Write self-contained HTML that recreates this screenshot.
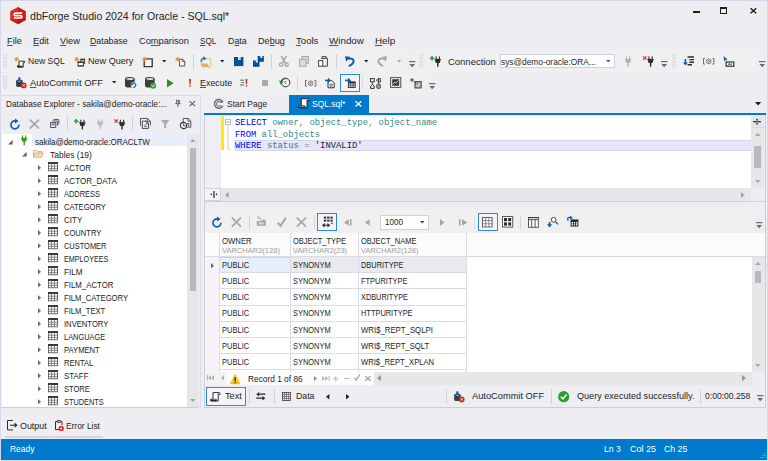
<!DOCTYPE html>
<html><head><meta charset="utf-8"><title>dbForge Studio 2024 for Oracle</title>
<style>
*{box-sizing:border-box;margin:0;padding:0}
html,body{width:768px;height:461px;overflow:hidden;background:#EEEEF2;font-family:"Liberation Sans",sans-serif;font-size:10px;color:#242424}
.a{position:absolute}
.t{position:absolute;white-space:nowrap;line-height:14px;height:14px;transform-origin:0 0}
.m{position:absolute;white-space:pre;font-family:"Liberation Mono",monospace;transform-origin:0 0}
u{text-decoration:underline;text-underline-offset:1px;text-decoration-thickness:0.9px;text-decoration-color:#555}
svg{position:absolute;overflow:visible}
</style></head><body>
<div class="a" style="left:0px;top:0px;width:768px;height:461px;background:transparent;border:1px solid #D6D9EA;border-right-width:1.5px;border-bottom-width:1.5px;"></div>
<div class="a" style="left:1px;top:50.5px;width:406px;height:21.5px;background:#F0F0F1;"></div>
<div class="a" style="left:417px;top:50.5px;width:244px;height:21.5px;background:#F0F0F1;"></div>
<div class="a" style="left:670px;top:50.5px;width:85px;height:21.5px;background:#F0F0F1;"></div>
<div class="a" style="left:1px;top:72.5px;width:425.5px;height:21px;background:#F0F0F1;"></div>
<div class="a" style="left:205px;top:210px;width:549px;height:23px;background:#F0F0F1;"></div>
<div class="a" style="left:2px;top:134px;width:185px;height:273px;background:#fff;"></div>
<div class="a" style="left:187px;top:134px;width:12px;height:273px;background:#E7E7EA;"></div>
<div class="a" style="left:190px;top:148px;width:6px;height:143px;background:#B9B9BD;"></div>
<div class="a" style="left:32.3px;top:134.3px;width:154.7px;height:11.9px;background:#E9EEFB;"></div>
<div class="a" style="left:1px;top:407px;width:198px;height:1px;background:#CCCEDB;"></div>
<div class="a" style="left:203.8px;top:112.9px;width:562.2px;height:1.9px;background:#007ACC;"></div>
<div class="a" style="left:204px;top:114.8px;width:561px;height:1.2px;background:#E4EAF6;"></div>
<div class="a" style="left:204px;top:115px;width:1px;height:293px;background:#CCCEDB;"></div>
<div class="a" style="left:764.5px;top:115px;width:1px;height:293px;background:#CCCEDB;"></div>
<div class="a" style="left:204px;top:407px;width:561px;height:1px;background:#CCCEDB;"></div>
<div class="a" style="left:289.25px;top:95px;width:79.5px;height:19px;background:#007ACC;"></div>
<div class="a" style="left:205px;top:116px;width:545.5px;height:72px;background:#fff;"></div>
<div class="a" style="left:205px;top:116px;width:15.75px;height:72px;background:#EFEFF3;"></div>
<div class="a" style="left:220.75px;top:116.25px;width:3.25px;height:33.75px;background:#FFEE00;"></div>
<div class="a" style="left:234px;top:139.5px;width:517px;height:11px;background:#E6E6FA;border-top:1px solid #D4D4EC;border-bottom:1px solid #D4D4EC;"></div>
<div class="a" style="left:205px;top:188px;width:546px;height:13px;background:#E7E7EA;"></div>
<div class="a" style="left:750.5px;top:116px;width:13.7px;height:85px;background:#E7E7EA;"></div>
<div class="a" style="left:753.5px;top:145.5px;width:7px;height:22px;background:#B9B9BD;"></div>
<div class="a" style="left:205px;top:201px;width:559.5px;height:1px;background:#CCCEDB;"></div>
<div class="a" style="left:205px;top:233px;width:559.5px;height:23.6px;background:#FBFBFC;"></div>
<div class="a" style="left:205px;top:256.6px;width:546.5px;height:115.4px;background:#fff;"></div>
<div class="a" style="left:205px;top:256.6px;width:14.5px;height:115.4px;background:#F5F5F8;"></div>
<div class="a" style="left:751.5px;top:256.6px;width:13px;height:115.4px;background:#E7E7EA;"></div>
<div class="a" style="left:754.5px;top:270.7px;width:6.5px;height:12.5px;background:#B9B9BD;"></div>
<div class="a" style="left:205px;top:372px;width:546.5px;height:13px;background:#F3F3F6;"></div>
<div class="a" style="left:226px;top:372px;width:148px;height:13px;background:#FCFCFD;"></div>
<div class="a" style="left:373.75px;top:372px;width:377.75px;height:13px;background:#E7E7EA;"></div>
<div class="a" style="left:1px;top:438.5px;width:766px;height:21px;background:#007ACC;"></div>
<div class="a" style="left:5px;top:435.8px;width:44.9px;height:2.7px;background:#D2D4DE;"></div>
<div class="a" style="left:51.3px;top:435.8px;width:51.6px;height:2.7px;background:#D2D4DE;"></div>
<div class="a" style="left:219px;top:256.8px;width:247.5px;height:16.08px;background:#E9E9EE;"></div>
<div class="a" style="left:219px;top:256.8px;width:71.5px;height:16.08px;background:#E6EFFB;border:1px solid #C2D6F0;"></div>
<div class="a" style="left:205px;top:256.3px;width:559.5px;height:1px;background:#DADBE7;"></div>
<div class="a" style="left:219px;top:272.38px;width:248px;height:1px;background:#DADBE7;"></div>
<div class="a" style="left:219px;top:288.46px;width:248px;height:1px;background:#DADBE7;"></div>
<div class="a" style="left:219px;top:304.54px;width:248px;height:1px;background:#DADBE7;"></div>
<div class="a" style="left:219px;top:320.62px;width:248px;height:1px;background:#DADBE7;"></div>
<div class="a" style="left:219px;top:336.7px;width:248px;height:1px;background:#DADBE7;"></div>
<div class="a" style="left:219px;top:352.78px;width:248px;height:1px;background:#DADBE7;"></div>
<div class="a" style="left:219px;top:368.86px;width:248px;height:1px;background:#DADBE7;"></div>
<div class="a" style="left:219px;top:233px;width:1px;height:139px;background:#DADBE7;"></div>
<div class="a" style="left:290px;top:233px;width:1px;height:139px;background:#DADBE7;"></div>
<div class="a" style="left:358px;top:233px;width:1px;height:139px;background:#DADBE7;"></div>
<div class="a" style="left:466px;top:233px;width:1px;height:139px;background:#DADBE7;"></div>
<svg style="left:10.4px;top:6.7px" width="16" height="17.2" viewBox="0 0 16 17.2"><path d="M8 0L15.8 4.3V12.9L8 17.2L0.2 12.9V4.3Z" fill="#E5261C"/><path d="M8 0L15.8 4.3V12.9L8 17.2Z" fill="#B8160E" opacity=".55"/><path d="M8 8.6L15.8 12.9L8 17.2L0.2 12.9Z" fill="#A8120C" opacity=".35"/><path d="M12.3 6.2H5.2Q4.2 6.2 4.2 7.2V7.7Q4.2 8.6 5.2 8.6H10.8Q11.8 8.6 11.8 9.5V10Q11.8 11 10.8 11H3.7" fill="none" stroke="#fff" stroke-width="1.7"/></svg>
<div class="a" style="left:692.6px;top:10.6px;width:7.2px;height:2.3px;background:#1E1E1E;"></div>
<div class="a" style="left:720px;top:7.2px;width:7.2px;height:6.6px;background:transparent;border:1px solid #1E1E1E;border-top-width:2px;"></div>
<svg style="left:749.7px;top:7.7px" width="6.8" height="5.6" viewBox="0 0 6.8 5.6"><path d="M0.6 0.3L6.2 5.3M6.2 0.3L0.6 5.3" stroke="#1E1E1E" stroke-width="1.5"/></svg>
<svg style="left:2.7px;top:54px" width="4.6" height="14"><defs><pattern id="g2_54" width="3.4" height="3.4" patternUnits="userSpaceOnUse"><rect x="0" y="0" width="1.1" height="1.1" fill="#BCBCC0"/><rect x="1.7" y="1.7" width="1.1" height="1.1" fill="#BCBCC0"/></pattern></defs><rect width="4.6" height="14" fill="url(#g2_54)"/></svg>
<svg style="left:13.5px;top:55.5px" width="12" height="12" viewBox="0 0 12 12"><path d="M2.7 0.5 L3.564 2.3360000000000003 L5.4 3.2 L3.564 4.064 L2.7 5.9 L1.836 4.064 L0.0 3.2 L1.836 2.3360000000000003Z" fill="#DB9630"/><path d="M0.8100000000000003 1.3100000000000003L4.59 5.09M4.59 1.3100000000000003L0.8100000000000003 5.09" stroke="#DB9630" stroke-width="0.8"/><path d="M5 5.2H10.6V6.6H9.2V11.2H3.6V9.6H5Z" fill="#fff" stroke="#2B2B2B" stroke-width="1"/><path d="M3.6 10.4H8.2" stroke="#2B2B2B" stroke-width="1.6"/></svg>
<svg style="left:73.5px;top:55.5px" width="12" height="11" viewBox="0 0 12 11"><path d="M2.7 0.5 L3.564 2.3360000000000003 L5.4 3.2 L3.564 4.064 L2.7 5.9 L1.836 4.064 L0.0 3.2 L1.836 2.3360000000000003Z" fill="#DB9630"/><path d="M0.8100000000000003 1.3100000000000003L4.59 5.09M4.59 1.3100000000000003L0.8100000000000003 5.09" stroke="#DB9630" stroke-width="0.8"/><rect x="6.9" y="3.3" width="3.8" height="4.4" fill="#fff" stroke="#3A3A3C" stroke-width="0.9"/><path d="M6.5 3.5H11.1" stroke="#3A3A3C" stroke-width="1.6"/><rect x="4.1" y="6" width="5.3" height="3.9" fill="#fff" stroke="#3A3A3C" stroke-width="0.9"/><path d="M3.6 6.3H9.8" stroke="#3A3A3C" stroke-width="1.5"/><path d="M3.6 9.9H9.8" stroke="#3A3A3C" stroke-width="1.1"/></svg>
<svg style="left:142px;top:55.5px" width="11.5" height="11.5" viewBox="0 0 11.5 11.5"><path d="M3.5 2.9H10.2V10.6H2.2V5" fill="#F4F4F6" stroke="#3A3A3C" stroke-width="1.4"/><path d="M2.5 0.5 L3.364 2.3360000000000003 L5.2 3.2 L3.364 4.064 L2.5 5.9 L1.636 4.064 L-0.20000000000000018 3.2 L1.636 2.3360000000000003Z" fill="#DB9630"/><path d="M0.6100000000000001 1.3100000000000003L4.39 5.09M4.39 1.3100000000000003L0.6100000000000001 5.09" stroke="#DB9630" stroke-width="0.8"/></svg>
<svg style="left:161.6px;top:60px" width="4.4" height="2.4" viewBox="0 0 4.4 2.4"><path d="M0 0H4.4L2.2 2.4Z" fill="#2B2B2B"/></svg>
<svg style="left:175px;top:55.5px" width="11" height="11" viewBox="0 0 11 11"><path d="M4.5 3.2H7.6L9.7 5.3V10H4.5Z" fill="#F6F6F8" stroke="#444448" stroke-width="0.9"/><path d="M7.4 3.2V5.5H9.7" fill="none" stroke="#444448" stroke-width="0.8"/><path d="M2.6 0.5 L3.4640000000000004 2.3360000000000003 L5.300000000000001 3.2 L3.4640000000000004 4.064 L2.6 5.9 L1.736 4.064 L-0.10000000000000009 3.2 L1.736 2.3360000000000003Z" fill="#DB9630"/><path d="M0.7100000000000002 1.3100000000000003L4.49 5.09M4.49 1.3100000000000003L0.7100000000000002 5.09" stroke="#DB9630" stroke-width="0.8"/></svg>
<div class="a" style="left:193px;top:53.6px;width:1px;height:15px;background:#CFD1DE;"></div>
<svg style="left:200px;top:55.5px" width="12" height="12" viewBox="0 0 12 12"><rect x="2" y="2.8" width="8.7" height="8.2" fill="#F3F1EF"/><path d="M5.6 2.8H10.7V11.2H8" fill="none" stroke="#E3BE82" stroke-width="0.9"/><path d="M0.4 7.4H7.6L9.4 11.3H2Z" fill="#DDB26A"/><path d="M1.8 6.4Q0 3.2 3.6 2.4" fill="none" stroke="#3C84CE" stroke-width="1.6"/><path d="M3.3 0.2L6.3 2.4L3.5 4.6Z" fill="#0A5DB0"/></svg>
<svg style="left:220px;top:60px" width="4.4" height="2.4" viewBox="0 0 4.4 2.4"><path d="M0 0H4.4L2.2 2.4Z" fill="#2B2B2B"/></svg>
<svg style="left:234.1px;top:56.7px" width="9.4" height="9.1" viewBox="0 0 9.4 9.1"><path d="M0 0H9.4V9.1H0Z" fill="#00529C"/><rect x="4.1" y="0" width="2.9" height="3" fill="#fff"/><rect x="5.6" y="0.6" width="1" height="1.8" fill="#00529C"/></svg>
<svg style="left:253.2px;top:56px" width="11" height="10.8" viewBox="0 0 11 10.8"><rect x="4.7" y="0" width="6.2" height="5.8" fill="#00529C"/><rect x="7.3" y="0" width="2" height="1.9" fill="#fff"/><rect x="0" y="4.5" width="6.5" height="6.3" fill="#00529C"/><rect x="2.8" y="4.5" width="2" height="2" fill="#fff"/></svg>
<div class="a" style="left:271px;top:53.6px;width:1px;height:15px;background:#CFD1DE;"></div>
<svg style="left:279px;top:56px" width="9.6" height="10.8" viewBox="0 0 9.6 10.8"><path d="M2.2 0L6.6 7.4M7.4 0L3 7.4" stroke="#A8A8AC" stroke-width="1.6" fill="none"/><circle cx="2" cy="8.6" r="1.7" fill="none" stroke="#A8A8AC" stroke-width="1.3"/><circle cx="7.6" cy="8.6" r="1.7" fill="none" stroke="#A8A8AC" stroke-width="1.3"/></svg>
<svg style="left:299px;top:56px" width="10" height="10.8" viewBox="0 0 10 10.8"><rect x="3" y="0.5" width="6.5" height="6.8" fill="#DADADC" stroke="#A8A8AC" stroke-width="1"/><rect x="0.5" y="3.2" width="6.5" height="7" fill="#DADADC" stroke="#A8A8AC" stroke-width="1"/></svg>
<svg style="left:318px;top:56px" width="10.4" height="10.8" viewBox="0 0 10.4 10.8"><path d="M3 2.4H9.4V10.2H5" fill="none" stroke="#3A3A3C" stroke-width="0.95"/><path d="M4.2 2.4V0.6H8.2V2.4" fill="none" stroke="#3A3A3C" stroke-width="0.9"/><rect x="0.6" y="4.6" width="4.2" height="5.6" fill="#fff" stroke="#3A3A3C" stroke-width="0.95"/></svg>
<div class="a" style="left:336px;top:53.6px;width:1px;height:15px;background:#CFD1DE;"></div>
<svg style="left:344.5px;top:56px" width="10" height="10.6" viewBox="0 0 10 10.6"><path d="M2.4 2.8Q8.8 1.6 8.6 5.4Q8.4 8 3.8 10.2" fill="none" stroke="#0A5DB0" stroke-width="2"/><path d="M0 0.2L5 0.7L1.2 5.8Z" fill="#0A5DB0"/></svg>
<svg style="left:363.8px;top:60px" width="4.4" height="2.4" viewBox="0 0 4.4 2.4"><path d="M0 0H4.4L2.2 2.4Z" fill="#2B2B2B"/></svg>
<svg style="left:377.4px;top:56px" width="10" height="10.6" viewBox="0 0 10 10.6"><path d="M7.6 2.8Q1.2 1.6 1.4 5.4Q1.6 8 6.2 10.2" fill="none" stroke="#A8A8AC" stroke-width="2"/><path d="M10 0.2L5 0.7L8.8 5.8Z" fill="#A8A8AC"/></svg>
<svg style="left:397.2px;top:60px" width="4.4" height="2.4" viewBox="0 0 4.4 2.4"><path d="M0 0H4.4L2.2 2.4Z" fill="#A8A8AC"/></svg>
<svg style="left:409px;top:60.7px" width="6.4" height="6.5" viewBox="0 0 6.4 6.5"><rect x="0" y="0" width="6.4" height="1.2" fill="#6A6A6E"/><path d="M0.3 3H6.1L3.2 6.3Z" fill="#6A6A6E"/></svg>
<svg style="left:418.8px;top:54px" width="4.6" height="14"><defs><pattern id="g418_54" width="3.4" height="3.4" patternUnits="userSpaceOnUse"><rect x="0" y="0" width="1.1" height="1.1" fill="#BCBCC0"/><rect x="1.7" y="1.7" width="1.1" height="1.1" fill="#BCBCC0"/></pattern></defs><rect width="4.6" height="14" fill="url(#g418_54)"/></svg>
<svg style="left:430px;top:56px" width="11" height="10.8" viewBox="0 0 11 10.8"><path d="M-0.20000000000000018 2.3H4.2M2 0.09999999999999964V4.5" stroke="#2E9B34" stroke-width="1.6"/><g transform="translate(4.6,0)"><rect x="1" y="0.2" width="1.1" height="3" rx="0.5" fill="#2E2E30"/><rect x="4.2" y="0.2" width="1.1" height="3" rx="0.5" fill="#2E2E30"/><rect x="0" y="2.9" width="6.3" height="1.3" fill="#2E2E30"/><path d="M0.7 4H5.6V5.8Q5.6 7 4.4 7H1.9Q0.7 7 0.7 5.8Z" fill="#2E2E30"/><rect x="2.5" y="6.8" width="1.4" height="4" fill="#2E2E30"/></g></svg>
<div class="a" style="left:500px;top:54.4px;width:115px;height:13.8px;background:#fff;border:1px solid #CCD0E4;"></div>
<svg style="left:605.8px;top:60.2px" width="4.6" height="2.5" viewBox="0 0 4.6 2.5"><path d="M0 0H4.6L2.3 2.5Z" fill="#5A5A5E"/></svg>
<svg style="left:625px;top:56px" width="6.4" height="10.8" viewBox="0 0 6.4 10.8"><rect x="1" y="0.2" width="1.1" height="3" rx="0.5" fill="#B4B4B8"/><rect x="4.2" y="0.2" width="1.1" height="3" rx="0.5" fill="#B4B4B8"/><rect x="0" y="2.9" width="6.3" height="1.3" fill="#B4B4B8"/><path d="M0.7 4H5.6V5.8Q5.6 7 4.4 7H1.9Q0.7 7 0.7 5.8Z" fill="#B4B4B8"/><rect x="2.5" y="6.8" width="1.4" height="4" fill="#B4B4B8"/></svg>
<svg style="left:643px;top:56px" width="11" height="10.8" viewBox="0 0 11 10.8"><path d="M0.10000000000000009 0.30000000000000004L3.5 3.7M3.5 0.30000000000000004L0.10000000000000009 3.7" stroke="#D9291C" stroke-width="1.1"/><g transform="translate(4.4,0)"><rect x="1" y="0.2" width="1.1" height="3" rx="0.5" fill="#2E2E30"/><rect x="4.2" y="0.2" width="1.1" height="3" rx="0.5" fill="#2E2E30"/><rect x="0" y="2.9" width="6.3" height="1.3" fill="#2E2E30"/><path d="M0.7 4H5.6V5.8Q5.6 7 4.4 7H1.9Q0.7 7 0.7 5.8Z" fill="#2E2E30"/><rect x="2.5" y="6.8" width="1.4" height="4" fill="#2E2E30"/></g></svg>
<svg style="left:661.4px;top:61px" width="6.4" height="6.5" viewBox="0 0 6.4 6.5"><rect x="0" y="0" width="6.4" height="1.2" fill="#6A6A6E"/><path d="M0.3 3H6.1L3.2 6.3Z" fill="#6A6A6E"/></svg>
<svg style="left:672.2px;top:54px" width="4.6" height="14"><defs><pattern id="g672_54" width="3.4" height="3.4" patternUnits="userSpaceOnUse"><rect x="0" y="0" width="1.1" height="1.1" fill="#BCBCC0"/><rect x="1.7" y="1.7" width="1.1" height="1.1" fill="#BCBCC0"/></pattern></defs><rect width="4.6" height="14" fill="url(#g672_54)"/></svg>
<svg style="left:682.6px;top:56px" width="11" height="10.8" viewBox="0 0 11 10.8"><path d="M4.6 1H11M6.4 3.6H11M6.4 6.2H11M4.6 8.8H9" stroke="#2B2B2B" stroke-width="1.4"/><path d="M2.4 3V8" stroke="#0A5DB0" stroke-width="1.6"/><path d="M0 6.4H4.8L2.4 9.6Z" fill="#0A5DB0"/></svg>
<svg style="left:702.9px;top:58px" width="11.4" height="6.6" viewBox="0 0 11.4 6.6"><path d="M2 0.5H0.5V6.1H2M9.4 0.5H10.9V6.1H9.4" fill="none" stroke="#606064" stroke-width="0.9"/><circle cx="5.7" cy="3.3" r="2.4" fill="none" stroke="#606064" stroke-width="0.8"/><circle cx="5.7" cy="3.3" r="0.9" fill="none" stroke="#606064" stroke-width="0.7"/></svg>
<svg style="left:722.6px;top:56px" width="11.4" height="10.8" viewBox="0 0 11.4 10.8"><path d="M0.4 0L4.6 3.6L2.6 3.9L1.6 5.8Z" fill="#0A5DB0"/><rect x="3.2" y="6" width="7.6" height="4.2" fill="#fff" stroke="#2B2B2B" stroke-width="1.2"/><path d="M5 8.1H9" stroke="#2B2B2B" stroke-width="1"/></svg>
<svg style="left:758.8px;top:61px" width="6.4" height="6.5" viewBox="0 0 6.4 6.5"><rect x="0" y="0" width="6.4" height="1.2" fill="#6A6A6E"/><path d="M0.3 3H6.1L3.2 6.3Z" fill="#6A6A6E"/></svg>
<svg style="left:2.7px;top:76px" width="4.6" height="14"><defs><pattern id="g2_76" width="3.4" height="3.4" patternUnits="userSpaceOnUse"><rect x="0" y="0" width="1.1" height="1.1" fill="#BCBCC0"/><rect x="1.7" y="1.7" width="1.1" height="1.1" fill="#BCBCC0"/></pattern></defs><rect width="4.6" height="14" fill="url(#g2_76)"/></svg>
<svg style="left:15.8px;top:77.4px" width="10.6" height="11" viewBox="0 0 10.6 11"><g transform="translate(0.1,2.8)"><path d="M0 1.235V5.864999999999999Q0 7.1 3.25 7.1Q6.5 7.1 6.5 5.864999999999999V1.235Z" fill="#3C3C3E"/><ellipse cx="3.25" cy="1.3350000000000002" rx="2.7" ry="0.8850000000000001" fill="#E2E2E5" stroke="#3C3C3E" stroke-width="1.1"/></g><path d="M2.4 0.4Q3.35 -0.3 4.3 0.4L4.9 3.9H1.8Z" fill="#1E5FB4"/><circle cx="7.7" cy="8.4" r="2.9" fill="#E01B10"/><path d="M6.6 7.300000000000001L8.8 9.5M8.8 7.300000000000001L6.6 9.5" stroke="#fff" stroke-width="0.9"/></svg>
<svg style="left:111.8px;top:81.4px" width="4.4" height="2.4" viewBox="0 0 4.4 2.4"><path d="M0 0H4.4L2.2 2.4Z" fill="#2B2B2B"/></svg>
<svg style="left:124.8px;top:77.2px" width="11.6" height="11.2" viewBox="0 0 11.6 11.2"><g><path d="M0 1.843V8.757Q0 10.6 4.85 10.6Q9.7 10.6 9.7 8.757V1.843Z" fill="#3C3C3E"/><ellipse cx="4.85" cy="1.943" rx="4.3" ry="1.4929999999999999" fill="#E2E2E5" stroke="#3C3C3E" stroke-width="1.1"/></g><circle cx="8.7" cy="8" r="2.9" fill="#F0F0F1"/><path d="M6.6 7.6A2.1 2.1 0 1 1 8.2 10.3" fill="none" stroke="#1F6FC4" stroke-width="1.3"/><path d="M5.6 6.2L9 6.6L6.6 9Z" fill="#1F6FC4"/></svg>
<svg style="left:144.9px;top:77.2px" width="11.6" height="11.6" viewBox="0 0 11.6 11.6"><g><path d="M0 1.843V8.757Q0 10.6 4.85 10.6Q9.7 10.6 9.7 8.757V1.843Z" fill="#3C3C3E"/><ellipse cx="4.85" cy="1.943" rx="4.3" ry="1.4929999999999999" fill="#E2E2E5" stroke="#3C3C3E" stroke-width="1.1"/></g><circle cx="8.1" cy="8.7" r="3" fill="#2FA23A"/><path d="M6.8 8.7L7.8 9.799999999999999L9.5 7.6" stroke="#fff" stroke-width="0.9" fill="none"/></svg>
<svg style="left:167px;top:78.6px" width="6.6" height="8.6" viewBox="0 0 6.6 8.6"><path d="M0 0L6.6 4.3L0 8.6Z" fill="#2E8B2E"/></svg>
<svg style="left:189.1px;top:79px" width="2" height="7.8" viewBox="0 0 2 7.8"><path d="M0 0H2L1.6 5.4H0.4Z" fill="#BE3A2C"/><rect x="0.3" y="6.3" width="1.4" height="1.5" fill="#BE3A2C"/></svg>
<svg style="left:240.4px;top:79.2px" width="8" height="7.8" viewBox="0 0 8 7.8"><path d="M0 1.2H4.2M1.2 3.6H4.2M0 6H4.2" stroke="#4A4A4E" stroke-width="0.8"/><path d="M5.6 0H7.4L7.1 5.2H5.9Z" fill="#BE3A2C"/><rect x="5.8" y="6.2" width="1.4" height="1.4" fill="#BE3A2C"/></svg>
<div class="a" style="left:261.6px;top:79.9px;width:6.7px;height:6.3px;background:#A9A9AC;"></div>
<svg style="left:279px;top:77.4px" width="12" height="10.6" viewBox="0 0 12 10.6"><circle cx="6.6" cy="5.6" r="4.2" fill="#fff" stroke="#2B2B2B" stroke-width="1"/><path d="M6.6 1.4A4.2 4.2 0 0 0 2.6 4.4" stroke="#2E8B2E" stroke-width="1.8" fill="none"/><path d="M0 3.4L5 4.4L1.6 7.4Z" fill="#2E8B2E"/><path d="M7.4 3.8L5.8 5.6L7.4 7" stroke="#2B2B2B" stroke-width="0.9" fill="none"/></svg>
<div class="a" style="left:297.3px;top:75.5px;width:1px;height:14.5px;background:#CFD1DE;"></div>
<svg style="left:304.8px;top:79.6px" width="11.4" height="6.6" viewBox="0 0 11.4 6.6"><path d="M2 0.5H0.5V6.1H2M9.4 0.5H10.9V6.1H9.4" fill="none" stroke="#606064" stroke-width="0.9"/><circle cx="5.7" cy="3.3" r="2.4" fill="none" stroke="#606064" stroke-width="0.8"/><circle cx="5.7" cy="3.3" r="0.9" fill="none" stroke="#606064" stroke-width="0.7"/></svg>
<svg style="left:324.8px;top:77.6px" width="10" height="10.4" viewBox="0 0 10 10.4"><path d="M3 2.6H6.8L9.2 5V9.8H3Z" fill="#fff" stroke="#2B2B2B" stroke-width="1"/><path d="M4.4 6.2H7.8M4.4 8H7.8" stroke="#2B2B2B" stroke-width="0.8"/><path d="M0 2.4H3.6" stroke="#0A5DB0" stroke-width="1.6"/><path d="M3 -0.20000000000000018L6.2 2.4L3 5.0Z" fill="#0A5DB0"/></svg>
<div class="a" style="left:340.1px;top:73.7px;width:20px;height:18px;background:#F4F4F6;border:1.2px solid #2E8AD8;"></div>
<svg style="left:344.8px;top:78px" width="10.8" height="10" viewBox="0 0 10.8 10"><path d="M0 2.4H3.6" stroke="#0A5DB0" stroke-width="1.6"/><path d="M3 -0.20000000000000018L6.2 2.4L3 5.0Z" fill="#0A5DB0"/><rect x="3.4" y="4" width="6.8" height="5.6" fill="#fff" stroke="#2B2B2B" stroke-width="0.9"/><path d="M3.4 6H10.2M3.4 7.8H10.2M5.7 4V9.6M8 4V9.6" stroke="#2B2B2B" stroke-width="0.7"/><path d="M3.4 4.4H10.2" stroke="#2B2B2B" stroke-width="1.3"/></svg>
<div class="a" style="left:362.4px;top:75.5px;width:1px;height:14.5px;background:#DADBE6;"></div>
<svg style="left:370px;top:77.6px" width="11" height="11" viewBox="0 0 11 11"><rect x="0.6" y="0.6" width="3.6" height="3.2" fill="#fff" stroke="#2B2B2B" stroke-width="1"/><path d="M6.4 2.2L8.6 0.4V4Z" fill="none" stroke="#2B2B2B" stroke-width="0.9"/><path d="M8.6 0.6H10.4V4H8.6" fill="none" stroke="#2B2B2B" stroke-width="0.9"/><path d="M0.6 10.4V8L2.4 6.4L4.2 8V10.4Z" fill="none" stroke="#2B2B2B" stroke-width="1"/><rect x="6.8" y="6.2" width="3.6" height="4.2" rx="0.8" fill="#9A9A9E" stroke="#4A4A4E" stroke-width="0.9"/><path d="M2.4 4V6M8.6 4.2V6" stroke="#2B2B2B" stroke-width="0.7"/></svg>
<svg style="left:390px;top:77.2px" width="11.4" height="11" viewBox="0 0 11.4 11"><rect x="0.6" y="0.6" width="10.2" height="9.8" fill="#F4F4F6" stroke="#4E4E52" stroke-width="1"/><rect x="2.2" y="2.2" width="7" height="6.6" fill="#3A3A3C"/><path d="M2.8 7.4L4.8 5L6 6.2L8.4 3.4" stroke="#D8D8DC" stroke-width="0.9" fill="none"/></svg>
<svg style="left:409.8px;top:78px" width="12" height="10.6" viewBox="0 0 12 10.6"><path d="M2 0V4M0 2H4" stroke="#2B2B2B" stroke-width="0.9"/><rect x="5" y="3.6" width="6.2" height="6.4" fill="#A2A2A6" stroke="#4A4A4E" stroke-width="1"/><path d="M6.4 7.4L7.8 8.8L10 5.4" stroke="#fff" stroke-width="0.9" fill="none"/><path d="M4.2 3.4L6 5.2" stroke="#2B2B2B" stroke-width="0.9"/></svg>
<svg style="left:428.6px;top:82.8px" width="6.4" height="6.5" viewBox="0 0 6.4 6.5"><rect x="0" y="0" width="6.4" height="1.2" fill="#6A6A6E"/><path d="M0.3 3H6.1L3.2 6.3Z" fill="#6A6A6E"/></svg>
<div class="a" style="left:1px;top:95px;width:199.5px;height:1px;background:#D9DCEB;"></div>
<div class="a" style="left:200px;top:95px;width:1px;height:313px;background:#D9DCEB;"></div>
<svg style="left:175px;top:100px" width="5.8" height="7" viewBox="0 0 5.8 7"><path d="M1.4 0.4H4.4M1.6 0.4V3.4M4.2 0.4V3.4M0.2 3.7H5.6M2.9 3.8V7" stroke="#5E5E62" stroke-width="1" fill="none"/><rect x="3.2" y="0.4" width="1" height="3" fill="#5E5E62"/></svg>
<svg style="left:189px;top:100.7px" width="6.6" height="5.4" viewBox="0 0 6.6 5.4"><path d="M0.5 0.2L6.1 5.2M6.1 0.2L0.5 5.2" stroke="#5A5A5E" stroke-width="1.1"/></svg>
<svg style="left:9.8px;top:118.6px" width="10" height="10.6" viewBox="0 0 10 10.6"><path d="M8.9 5.6A4 4 0 1 1 5.6 1.9" fill="none" stroke="#0A5DB0" stroke-width="1.6"/><path d="M5 -0.4L8.6 2L5 4.4Z" fill="#0A5DB0"/></svg>
<svg style="left:29px;top:119.2px" width="10.8" height="10.2" viewBox="0 0 10.8 10.2"><path d="M0.8 0.6L10 9.6M10 0.6L0.8 9.6" stroke="#A9A9AD" stroke-width="1.9"/></svg>
<svg style="left:50px;top:119px" width="9.6" height="9" viewBox="0 0 9.6 9"><path d="M3.6 0.5H8.8V5.4" fill="none" stroke="#5A5A5E" stroke-width="1"/><path d="M2.2 2H7.4V6.8" fill="none" stroke="#5A5A5E" stroke-width="1"/><rect x="0.6" y="3.5" width="5.2" height="5" fill="#E8E8EC" stroke="#505054" stroke-width="0.9"/><rect x="1.7" y="4.6" width="3" height="1.6" fill="#2F74C6"/></svg>
<div class="a" style="left:67.2px;top:116px;width:1px;height:15px;background:#CFD1DE;"></div>
<svg style="left:74.4px;top:118.6px" width="12" height="10.4" viewBox="0 0 12 10.4"><path d="M0.0 2.3H4.4M2.2 0.09999999999999964V4.5" stroke="#2E9B34" stroke-width="1.6"/><g transform="translate(5.2,0.4) scale(1,0.93)"><rect x="1" y="0.2" width="1.1" height="3" rx="0.5" fill="#2E2E30"/><rect x="4.2" y="0.2" width="1.1" height="3" rx="0.5" fill="#2E2E30"/><rect x="0" y="2.9" width="6.3" height="1.3" fill="#2E2E30"/><path d="M0.7 4H5.6V5.8Q5.6 7 4.4 7H1.9Q0.7 7 0.7 5.8Z" fill="#2E2E30"/><rect x="2.5" y="6.8" width="1.4" height="4" fill="#2E2E30"/></g></svg>
<svg style="left:96.6px;top:119px" width="6.6" height="10" viewBox="0 0 6.6 10"><g transform="scale(1.02,0.9)"><rect x="1" y="0.2" width="1.1" height="3" rx="0.5" fill="#B8B8BC"/><rect x="4.2" y="0.2" width="1.1" height="3" rx="0.5" fill="#B8B8BC"/><rect x="0" y="2.9" width="6.3" height="1.3" fill="#B8B8BC"/><path d="M0.7 4H5.6V5.8Q5.6 7 4.4 7H1.9Q0.7 7 0.7 5.8Z" fill="#B8B8BC"/><rect x="2.5" y="6.8" width="1.4" height="4" fill="#B8B8BC"/></g></svg>
<svg style="left:114.2px;top:118.6px" width="12" height="10.4" viewBox="0 0 12 10.4"><path d="M0.5000000000000002 0.30000000000000004L3.9000000000000004 3.7M3.9000000000000004 0.30000000000000004L0.5000000000000002 3.7" stroke="#D9291C" stroke-width="1.1"/><g transform="translate(4.8,0.4) scale(1,0.93)"><rect x="1" y="0.2" width="1.1" height="3" rx="0.5" fill="#2E2E30"/><rect x="4.2" y="0.2" width="1.1" height="3" rx="0.5" fill="#2E2E30"/><rect x="0" y="2.9" width="6.3" height="1.3" fill="#2E2E30"/><path d="M0.7 4H5.6V5.8Q5.6 7 4.4 7H1.9Q0.7 7 0.7 5.8Z" fill="#2E2E30"/><rect x="2.5" y="6.8" width="1.4" height="4" fill="#2E2E30"/></g></svg>
<div class="a" style="left:132.3px;top:116px;width:1px;height:15px;background:#CFD1DE;"></div>
<svg style="left:139.8px;top:118.2px" width="11" height="10.8" viewBox="0 0 11 10.8"><path d="M0.5 7.6V0.5H7.4L10.4 3.3V7.6" fill="#F4F4F6" stroke="#444448" stroke-width="0.9"/><path d="M7.3 0.5V3.4H10.4" fill="none" stroke="#444448" stroke-width="0.8"/><path d="M2.3 3.1H6.3L8.5 5.2V10.4H2.3Z" fill="#fff" stroke="#333336" stroke-width="0.9"/><path d="M6.2 3.1V5.3H8.5" fill="none" stroke="#333336" stroke-width="0.8"/><path d="M3.8 7H7M3.8 8.7H7" stroke="#55555A" stroke-width="0.8"/></svg>
<svg style="left:161px;top:120px" width="8.4" height="8.2" viewBox="0 0 8.4 8.2"><path d="M0 0H8.4L5.2 4V8.2H3.2V4Z" fill="#ABABAF"/></svg>
<svg style="left:179.8px;top:118px" width="11" height="11" viewBox="0 0 11 11"><path d="M3.2 4V0.5H8L10.8 3.2V9.2H7" fill="#F4F4F6" stroke="#444448" stroke-width="0.9"/><path d="M7.9 0.5V3.3H10.8" fill="none" stroke="#444448" stroke-width="0.8"/><rect x="7.2" y="5" width="2.2" height="1.6" fill="#55555A"/><rect x="7.6" y="7.2" width="1.8" height="1.2" fill="#77777B"/><circle cx="3.5" cy="7.5" r="3.1" fill="#F2F2F4" stroke="#333336" stroke-width="1.1"/><path d="M3.5 5.6V7.7H5.4" stroke="#333336" stroke-width="0.9" fill="none"/></svg>
<svg style="left:7.8px;top:139.7px" width="4.6" height="4.6" viewBox="0 0 4.6 4.6"><path d="M4.6 0V4.6H0Z" fill="#5E5E62"/></svg>
<svg style="left:20.6px;top:135.2px" width="6.4" height="10.4" viewBox="0 0 6.4 10.4"><g transform="scale(1,0.96)"><rect x="1" y="0.2" width="1.1" height="3" rx="0.5" fill="#3C9A1E"/><rect x="4.2" y="0.2" width="1.1" height="3" rx="0.5" fill="#3C9A1E"/><rect x="0" y="2.9" width="6.3" height="1.3" fill="#3C9A1E"/><path d="M0.7 4H5.6V5.8Q5.6 7 4.4 7H1.9Q0.7 7 0.7 5.8Z" fill="#3C9A1E"/><rect x="2.5" y="6.8" width="1.4" height="4" fill="#3C9A1E"/></g></svg>
<svg style="left:22.4px;top:152.3px" width="4.6" height="4.6" viewBox="0 0 4.6 4.6"><path d="M4.6 0V4.6H0Z" fill="#5E5E62"/></svg>
<svg style="left:33.4px;top:149.8px" width="10.6" height="7.8" viewBox="0 0 10.6 7.8"><path d="M0.5 7.2V0.5H3.6L4.6 1.6H9V3" fill="#FBF1DC" stroke="#DDB070" stroke-width="0.9"/><path d="M0.5 7.3L2.2 3H10.2L8.8 7.3Z" fill="#F3DDB0" stroke="#DDB070" stroke-width="0.9"/></svg>
<svg style="left:37.6px;top:164.9px" width="3" height="5.4" viewBox="0 0 3 5.4"><path d="M0 0L3 2.7L0 5.4Z" fill="#6E6E72"/></svg>
<svg style="left:48px;top:162.0px" width="10" height="9.2" viewBox="0 0 10 9.2"><rect x="0.4" y="0.4" width="9.2" height="8.4" fill="#fff" stroke="#4A4A4E" stroke-width="0.8"/><rect x="0" y="0" width="10" height="2" fill="#3A3A3C"/><path d="M0.4 4.2H9.6M0.4 6.4H9.6M3.5 2V8.8M6.5 2V8.8" stroke="#5A5A5E" stroke-width="0.7"/></svg>
<svg style="left:37.6px;top:177.92px" width="3" height="5.4" viewBox="0 0 3 5.4"><path d="M0 0L3 2.7L0 5.4Z" fill="#6E6E72"/></svg>
<svg style="left:48px;top:175.02px" width="10" height="9.2" viewBox="0 0 10 9.2"><rect x="0.4" y="0.4" width="9.2" height="8.4" fill="#fff" stroke="#4A4A4E" stroke-width="0.8"/><rect x="0" y="0" width="10" height="2" fill="#3A3A3C"/><path d="M0.4 4.2H9.6M0.4 6.4H9.6M3.5 2V8.8M6.5 2V8.8" stroke="#5A5A5E" stroke-width="0.7"/></svg>
<svg style="left:37.6px;top:190.94px" width="3" height="5.4" viewBox="0 0 3 5.4"><path d="M0 0L3 2.7L0 5.4Z" fill="#6E6E72"/></svg>
<svg style="left:48px;top:188.04px" width="10" height="9.2" viewBox="0 0 10 9.2"><rect x="0.4" y="0.4" width="9.2" height="8.4" fill="#fff" stroke="#4A4A4E" stroke-width="0.8"/><rect x="0" y="0" width="10" height="2" fill="#3A3A3C"/><path d="M0.4 4.2H9.6M0.4 6.4H9.6M3.5 2V8.8M6.5 2V8.8" stroke="#5A5A5E" stroke-width="0.7"/></svg>
<svg style="left:37.6px;top:203.96px" width="3" height="5.4" viewBox="0 0 3 5.4"><path d="M0 0L3 2.7L0 5.4Z" fill="#6E6E72"/></svg>
<svg style="left:48px;top:201.06px" width="10" height="9.2" viewBox="0 0 10 9.2"><rect x="0.4" y="0.4" width="9.2" height="8.4" fill="#fff" stroke="#4A4A4E" stroke-width="0.8"/><rect x="0" y="0" width="10" height="2" fill="#3A3A3C"/><path d="M0.4 4.2H9.6M0.4 6.4H9.6M3.5 2V8.8M6.5 2V8.8" stroke="#5A5A5E" stroke-width="0.7"/></svg>
<svg style="left:37.6px;top:216.98px" width="3" height="5.4" viewBox="0 0 3 5.4"><path d="M0 0L3 2.7L0 5.4Z" fill="#6E6E72"/></svg>
<svg style="left:48px;top:214.08px" width="10" height="9.2" viewBox="0 0 10 9.2"><rect x="0.4" y="0.4" width="9.2" height="8.4" fill="#fff" stroke="#4A4A4E" stroke-width="0.8"/><rect x="0" y="0" width="10" height="2" fill="#3A3A3C"/><path d="M0.4 4.2H9.6M0.4 6.4H9.6M3.5 2V8.8M6.5 2V8.8" stroke="#5A5A5E" stroke-width="0.7"/></svg>
<svg style="left:37.6px;top:230.0px" width="3" height="5.4" viewBox="0 0 3 5.4"><path d="M0 0L3 2.7L0 5.4Z" fill="#6E6E72"/></svg>
<svg style="left:48px;top:227.1px" width="10" height="9.2" viewBox="0 0 10 9.2"><rect x="0.4" y="0.4" width="9.2" height="8.4" fill="#fff" stroke="#4A4A4E" stroke-width="0.8"/><rect x="0" y="0" width="10" height="2" fill="#3A3A3C"/><path d="M0.4 4.2H9.6M0.4 6.4H9.6M3.5 2V8.8M6.5 2V8.8" stroke="#5A5A5E" stroke-width="0.7"/></svg>
<svg style="left:37.6px;top:243.02px" width="3" height="5.4" viewBox="0 0 3 5.4"><path d="M0 0L3 2.7L0 5.4Z" fill="#6E6E72"/></svg>
<svg style="left:48px;top:240.12px" width="10" height="9.2" viewBox="0 0 10 9.2"><rect x="0.4" y="0.4" width="9.2" height="8.4" fill="#fff" stroke="#4A4A4E" stroke-width="0.8"/><rect x="0" y="0" width="10" height="2" fill="#3A3A3C"/><path d="M0.4 4.2H9.6M0.4 6.4H9.6M3.5 2V8.8M6.5 2V8.8" stroke="#5A5A5E" stroke-width="0.7"/></svg>
<svg style="left:37.6px;top:256.04px" width="3" height="5.4" viewBox="0 0 3 5.4"><path d="M0 0L3 2.7L0 5.4Z" fill="#6E6E72"/></svg>
<svg style="left:48px;top:253.14px" width="10" height="9.2" viewBox="0 0 10 9.2"><rect x="0.4" y="0.4" width="9.2" height="8.4" fill="#fff" stroke="#4A4A4E" stroke-width="0.8"/><rect x="0" y="0" width="10" height="2" fill="#3A3A3C"/><path d="M0.4 4.2H9.6M0.4 6.4H9.6M3.5 2V8.8M6.5 2V8.8" stroke="#5A5A5E" stroke-width="0.7"/></svg>
<svg style="left:37.6px;top:269.06px" width="3" height="5.4" viewBox="0 0 3 5.4"><path d="M0 0L3 2.7L0 5.4Z" fill="#6E6E72"/></svg>
<svg style="left:48px;top:266.16px" width="10" height="9.2" viewBox="0 0 10 9.2"><rect x="0.4" y="0.4" width="9.2" height="8.4" fill="#fff" stroke="#4A4A4E" stroke-width="0.8"/><rect x="0" y="0" width="10" height="2" fill="#3A3A3C"/><path d="M0.4 4.2H9.6M0.4 6.4H9.6M3.5 2V8.8M6.5 2V8.8" stroke="#5A5A5E" stroke-width="0.7"/></svg>
<svg style="left:37.6px;top:282.08px" width="3" height="5.4" viewBox="0 0 3 5.4"><path d="M0 0L3 2.7L0 5.4Z" fill="#6E6E72"/></svg>
<svg style="left:48px;top:279.18px" width="10" height="9.2" viewBox="0 0 10 9.2"><rect x="0.4" y="0.4" width="9.2" height="8.4" fill="#fff" stroke="#4A4A4E" stroke-width="0.8"/><rect x="0" y="0" width="10" height="2" fill="#3A3A3C"/><path d="M0.4 4.2H9.6M0.4 6.4H9.6M3.5 2V8.8M6.5 2V8.8" stroke="#5A5A5E" stroke-width="0.7"/></svg>
<svg style="left:37.6px;top:295.1px" width="3" height="5.4" viewBox="0 0 3 5.4"><path d="M0 0L3 2.7L0 5.4Z" fill="#6E6E72"/></svg>
<svg style="left:48px;top:292.2px" width="10" height="9.2" viewBox="0 0 10 9.2"><rect x="0.4" y="0.4" width="9.2" height="8.4" fill="#fff" stroke="#4A4A4E" stroke-width="0.8"/><rect x="0" y="0" width="10" height="2" fill="#3A3A3C"/><path d="M0.4 4.2H9.6M0.4 6.4H9.6M3.5 2V8.8M6.5 2V8.8" stroke="#5A5A5E" stroke-width="0.7"/></svg>
<svg style="left:37.6px;top:308.12px" width="3" height="5.4" viewBox="0 0 3 5.4"><path d="M0 0L3 2.7L0 5.4Z" fill="#6E6E72"/></svg>
<svg style="left:48px;top:305.22px" width="10" height="9.2" viewBox="0 0 10 9.2"><rect x="0.4" y="0.4" width="9.2" height="8.4" fill="#fff" stroke="#4A4A4E" stroke-width="0.8"/><rect x="0" y="0" width="10" height="2" fill="#3A3A3C"/><path d="M0.4 4.2H9.6M0.4 6.4H9.6M3.5 2V8.8M6.5 2V8.8" stroke="#5A5A5E" stroke-width="0.7"/></svg>
<svg style="left:37.6px;top:321.14px" width="3" height="5.4" viewBox="0 0 3 5.4"><path d="M0 0L3 2.7L0 5.4Z" fill="#6E6E72"/></svg>
<svg style="left:48px;top:318.24px" width="10" height="9.2" viewBox="0 0 10 9.2"><rect x="0.4" y="0.4" width="9.2" height="8.4" fill="#fff" stroke="#4A4A4E" stroke-width="0.8"/><rect x="0" y="0" width="10" height="2" fill="#3A3A3C"/><path d="M0.4 4.2H9.6M0.4 6.4H9.6M3.5 2V8.8M6.5 2V8.8" stroke="#5A5A5E" stroke-width="0.7"/></svg>
<svg style="left:37.6px;top:334.16px" width="3" height="5.4" viewBox="0 0 3 5.4"><path d="M0 0L3 2.7L0 5.4Z" fill="#6E6E72"/></svg>
<svg style="left:48px;top:331.26px" width="10" height="9.2" viewBox="0 0 10 9.2"><rect x="0.4" y="0.4" width="9.2" height="8.4" fill="#fff" stroke="#4A4A4E" stroke-width="0.8"/><rect x="0" y="0" width="10" height="2" fill="#3A3A3C"/><path d="M0.4 4.2H9.6M0.4 6.4H9.6M3.5 2V8.8M6.5 2V8.8" stroke="#5A5A5E" stroke-width="0.7"/></svg>
<svg style="left:37.6px;top:347.18px" width="3" height="5.4" viewBox="0 0 3 5.4"><path d="M0 0L3 2.7L0 5.4Z" fill="#6E6E72"/></svg>
<svg style="left:48px;top:344.28px" width="10" height="9.2" viewBox="0 0 10 9.2"><rect x="0.4" y="0.4" width="9.2" height="8.4" fill="#fff" stroke="#4A4A4E" stroke-width="0.8"/><rect x="0" y="0" width="10" height="2" fill="#3A3A3C"/><path d="M0.4 4.2H9.6M0.4 6.4H9.6M3.5 2V8.8M6.5 2V8.8" stroke="#5A5A5E" stroke-width="0.7"/></svg>
<svg style="left:37.6px;top:360.2px" width="3" height="5.4" viewBox="0 0 3 5.4"><path d="M0 0L3 2.7L0 5.4Z" fill="#6E6E72"/></svg>
<svg style="left:48px;top:357.3px" width="10" height="9.2" viewBox="0 0 10 9.2"><rect x="0.4" y="0.4" width="9.2" height="8.4" fill="#fff" stroke="#4A4A4E" stroke-width="0.8"/><rect x="0" y="0" width="10" height="2" fill="#3A3A3C"/><path d="M0.4 4.2H9.6M0.4 6.4H9.6M3.5 2V8.8M6.5 2V8.8" stroke="#5A5A5E" stroke-width="0.7"/></svg>
<svg style="left:37.6px;top:373.22px" width="3" height="5.4" viewBox="0 0 3 5.4"><path d="M0 0L3 2.7L0 5.4Z" fill="#6E6E72"/></svg>
<svg style="left:48px;top:370.32px" width="10" height="9.2" viewBox="0 0 10 9.2"><rect x="0.4" y="0.4" width="9.2" height="8.4" fill="#fff" stroke="#4A4A4E" stroke-width="0.8"/><rect x="0" y="0" width="10" height="2" fill="#3A3A3C"/><path d="M0.4 4.2H9.6M0.4 6.4H9.6M3.5 2V8.8M6.5 2V8.8" stroke="#5A5A5E" stroke-width="0.7"/></svg>
<svg style="left:37.6px;top:386.24px" width="3" height="5.4" viewBox="0 0 3 5.4"><path d="M0 0L3 2.7L0 5.4Z" fill="#6E6E72"/></svg>
<svg style="left:48px;top:383.34px" width="10" height="9.2" viewBox="0 0 10 9.2"><rect x="0.4" y="0.4" width="9.2" height="8.4" fill="#fff" stroke="#4A4A4E" stroke-width="0.8"/><rect x="0" y="0" width="10" height="2" fill="#3A3A3C"/><path d="M0.4 4.2H9.6M0.4 6.4H9.6M3.5 2V8.8M6.5 2V8.8" stroke="#5A5A5E" stroke-width="0.7"/></svg>
<svg style="left:37.6px;top:399.26px" width="3" height="5.4" viewBox="0 0 3 5.4"><path d="M0 0L3 2.7L0 5.4Z" fill="#6E6E72"/></svg>
<svg style="left:48px;top:396.36px" width="10" height="9.2" viewBox="0 0 10 9.2"><rect x="0.4" y="0.4" width="9.2" height="8.4" fill="#fff" stroke="#4A4A4E" stroke-width="0.8"/><rect x="0" y="0" width="10" height="2" fill="#3A3A3C"/><path d="M0.4 4.2H9.6M0.4 6.4H9.6M3.5 2V8.8M6.5 2V8.8" stroke="#5A5A5E" stroke-width="0.7"/></svg>
<svg style="left:190.2px;top:139.4px" width="5.6" height="3" viewBox="0 0 5.6 3"><path d="M0 3L2.8 0L5.6 3Z" fill="#A6A6AA"/></svg>
<svg style="left:190.2px;top:398.6px" width="5.6" height="3" viewBox="0 0 5.6 3"><path d="M0 0H5.6L2.8 3Z" fill="#A6A6AA"/></svg>
<svg style="left:211.7px;top:216.8px" width="10" height="10.6" viewBox="0 0 10 10.6"><path d="M8.9 5.6A4 4 0 1 1 5.6 1.9" fill="none" stroke="#0A5DB0" stroke-width="1.6"/><path d="M5 -0.4L8.6 2L5 4.4Z" fill="#0A5DB0"/></svg>
<svg style="left:230.8px;top:217.4px" width="10.8" height="10.2" viewBox="0 0 10.8 10.2"><path d="M0.8 0.6L10 9.6M10 0.6L0.8 9.6" stroke="#A9A9AD" stroke-width="1.9"/></svg>
<div class="a" style="left:249px;top:214.6px;width:1px;height:14.5px;background:#CFD1DE;"></div>
<svg style="left:256px;top:216.4px" width="10.6" height="10.4" viewBox="0 0 10.6 10.4"><path d="M2 1.2L5 3.6" stroke="#A6A6AA" stroke-width="1.2"/><path d="M1 0.4L3.4 0.6L2 2.6Z" fill="#A6A6AA"/><path d="M0.8 5V9.8H9.8V5Q9.8 3.8 8.6 3.8H5.8L5.2 5Z" fill="#A6A6AA"/><rect x="3" y="6.2" width="4.6" height="2.2" fill="#D8D8DC"/></svg>
<svg style="left:277px;top:217px" width="9.6" height="9.8" viewBox="0 0 9.6 9.8"><path d="M0.8 5.6L3.6 8.8L8.8 0.8" fill="none" stroke="#A6A6AA" stroke-width="2"/></svg>
<svg style="left:296px;top:217.4px" width="10.8" height="10.2" viewBox="0 0 10.8 10.2"><path d="M0.8 0.6L10 9.6M10 0.6L0.8 9.6" stroke="#A9A9AD" stroke-width="1.9"/></svg>
<div class="a" style="left:314.2px;top:214.6px;width:1px;height:14.5px;background:#CFD1DE;"></div>
<div class="a" style="left:317.2px;top:212.9px;width:19.7px;height:18.1px;background:#F4F4F6;border:1.2px solid #2E8AD8;"></div>
<svg style="left:322.2px;top:216.4px" width="11" height="11.2" viewBox="0 0 11 11.2"><rect x="1.9" y="0.6" width="2.3" height="2" fill="#333"/><rect x="5.15" y="0.6" width="2.3" height="2" fill="#333"/><rect x="8.4" y="0.6" width="2.3" height="2" fill="#333"/><rect x="1.9" y="3.6" width="2.3" height="2" fill="#333"/><rect x="5.15" y="3.6" width="2.3" height="2" fill="#333"/><rect x="8.4" y="3.6" width="2.3" height="2" fill="#333"/><path d="M1.6 9.2H6.8" stroke="#333" stroke-width="1.1"/><path d="M-0.2 9.2L2.8 7V11.4ZM8.4 9.2L5.4 7V11.4Z" fill="#333"/><path d="M8.4 6.8H10.8V8.6Z" fill="#333"/></svg>
<svg style="left:343.7px;top:218.7px" width="7.6" height="6.8" viewBox="0 0 7.6 6.8"><path d="M4.8 0V6.8L0 3.4Z" fill="#A6A6AA"/><rect x="6" y="0" width="1.5" height="6.8" fill="#A6A6AA"/></svg>
<svg style="left:365px;top:218.7px" width="4.6" height="6.8" viewBox="0 0 4.6 6.8"><path d="M4.6 0V6.8L0 3.4Z" fill="#A6A6AA"/></svg>
<div class="a" style="left:380px;top:214.5px;width:49.3px;height:15px;background:#fff;border:1px solid #CCD0E4;"></div>
<svg style="left:420.4px;top:220.8px" width="4.6" height="2.5" viewBox="0 0 4.6 2.5"><path d="M0 0H4.6L2.3 2.5Z" fill="#4A4A4E"/></svg>
<svg style="left:440.4px;top:218.7px" width="4.4" height="6.8" viewBox="0 0 4.4 6.8"><path d="M0 0V6.8L4.4 3.4Z" fill="#A6A6AA"/></svg>
<svg style="left:458.6px;top:218.7px" width="8.4" height="6.8" viewBox="0 0 8.4 6.8"><rect x="0" y="0" width="1.5" height="6.8" fill="#A6A6AA"/><path d="M3 0V6.8L8.2 3.4Z" fill="#A6A6AA"/></svg>
<div class="a" style="left:474.3px;top:214.6px;width:1px;height:14.5px;background:#DCDDE8;"></div>
<div class="a" style="left:477.7px;top:212.8px;width:20px;height:18.2px;background:#F4F4F6;border:1.2px solid #2E8AD8;"></div>
<svg style="left:482px;top:216.5px" width="10.6" height="10.4" viewBox="0 0 10.6 10.4"><rect x="0.5" y="0.5" width="9.6" height="9.4" fill="#fff" stroke="#505054" stroke-width="0.9"/><path d="M3.7 0.5V9.9M6.9 0.5V9.9M0.5 3.6H10.1M0.5 6.8H10.1" stroke="#606064" stroke-width="0.7"/></svg>
<svg style="left:502px;top:216.2px" width="11.2" height="11.6" viewBox="0 0 11.2 11.6"><rect x="0.5" y="0.5" width="10.2" height="10.6" fill="#fff" stroke="#5A5A5E" stroke-width="1"/><rect x="2" y="2" width="3" height="3.2" fill="#2B2B2B"/><rect x="6.2" y="2" width="3" height="3.2" fill="#2B2B2B"/><rect x="2" y="6.4" width="3" height="3.2" fill="#2B2B2B"/><rect x="6.2" y="6.4" width="3" height="3.2" fill="#2B2B2B"/></svg>
<div class="a" style="left:520.2px;top:214.6px;width:1px;height:14.5px;background:#CFD1DE;"></div>
<svg style="left:528px;top:216.9px" width="10.8" height="10.8" viewBox="0 0 10.8 10.8"><rect x="0.5" y="0.5" width="9.8" height="9.8" fill="#fff" stroke="#4A4A4E" stroke-width="0.9"/><path d="M0 0.6H10.8" stroke="#3A3A3C" stroke-width="1.2"/><path d="M0.5 2.7H10.3" stroke="#3A3A3C" stroke-width="0.9"/><path d="M3.7 2.7V10.2M7.1 2.7V10.2" stroke="#4A4A4E" stroke-width="0.9"/></svg>
<svg style="left:547.2px;top:217px" width="11.6" height="10.6" viewBox="0 0 11.6 10.6"><circle cx="6.6" cy="2.8" r="2.4" fill="#fff" stroke="#4A4A4E" stroke-width="1"/><path d="M8.4 4.6L11.2 7.4" stroke="#4A4A4E" stroke-width="1.3"/><path d="M2.6 5V8" stroke="#0A5DB0" stroke-width="1.7"/><path d="M0 7.2H5.2L2.6 10.6Z" fill="#0A5DB0"/></svg>
<svg style="left:567.2px;top:216.2px" width="11.4" height="10.6" viewBox="0 0 11.4 10.6"><path d="M1.4 4.6Q-0.2 2.6 1.4 1.6Q2.4 1 4 1.6" fill="none" stroke="#0A5DB0" stroke-width="1.3"/><path d="M3.2 -0.4L6 1.9L3 3.6Z" fill="#0A5DB0"/><rect x="3.6" y="3.4" width="7.8" height="7.2" fill="#2B2B2B"/><path d="M4.6 6H10.4V9.6H4.6Z" fill="#fff"/><path d="M6.5 5.4V10M8.5 5.4V10" stroke="#2B2B2B" stroke-width="0.9"/><path d="M4.4 7.8H10.6" stroke="#2B2B2B" stroke-width="0.6"/></svg>
<svg style="left:756px;top:222px" width="6.4" height="6.5" viewBox="0 0 6.4 6.5"><rect x="0" y="0" width="6.4" height="1.2" fill="#6A6A6E"/><path d="M0.3 3H6.1L3.2 6.3Z" fill="#6A6A6E"/></svg>
<svg style="left:211.2px;top:262.8px" width="3" height="5.4" viewBox="0 0 3 5.4"><path d="M0 0L3 2.7L0 5.4Z" fill="#6A6A6E"/></svg>
<svg style="left:755.2px;top:262.2px" width="5.6" height="3" viewBox="0 0 5.6 3"><path d="M0 3L2.8 0L5.6 3Z" fill="#A6A6AA"/></svg>
<svg style="left:755.2px;top:364.2px" width="5.6" height="3" viewBox="0 0 5.6 3"><path d="M0 0H5.6L2.8 3Z" fill="#A6A6AA"/></svg>
<div class="a" style="left:751.5px;top:372px;width:13px;height:13px;background:#EEEEF2;"></div>
<svg style="left:207px;top:375.4px" width="7" height="5.4" viewBox="0 0 7 5.4"><rect x="0" y="0" width="1" height="5.4" fill="#B0B0B4"/><path d="M4 0V5.4L1.2 2.7ZM7 0V5.4L4.2 2.7Z" fill="#B0B0B4"/></svg>
<svg style="left:220.6px;top:375.4px" width="3" height="5.4" viewBox="0 0 3 5.4"><path d="M3 0V5.4L0 2.7Z" fill="#B0B0B4"/></svg>
<svg style="left:230px;top:374.3px" width="10.2" height="10.2" viewBox="0 0 10.2 10.2"><path d="M5.1 0.3L10 9.9H0.2Z" fill="#FFCC00" stroke="#E6A800" stroke-width="0.5"/><rect x="4.5" y="3.4" width="1.3" height="3.6" fill="#1E1E1E"/><rect x="4.5" y="7.8" width="1.3" height="1.3" fill="#1E1E1E"/></svg>
<svg style="left:313.6px;top:375.8px" width="3" height="5.2" viewBox="0 0 3 5.2"><path d="M0 0V5.2L3 2.6Z" fill="#8E8E92"/></svg>
<svg style="left:322px;top:375.6px" width="8" height="5" viewBox="0 0 8 5"><path d="M0 0V5L2.8 2.5ZM3.2 0V5L6 2.5Z" fill="#B0B0B4"/><rect x="6.6" y="0" width="1" height="5" fill="#B0B0B4"/></svg>
<svg style="left:333.4px;top:375.7px" width="5.6" height="5.6" viewBox="0 0 5.6 5.6"><path d="M0 2.8H5.6M2.8 0V5.6" stroke="#B0B0B4" stroke-width="0.9"/></svg>
<svg style="left:344.3px;top:378px" width="5.4" height="1" viewBox="0 0 5.4 1"><rect width="5.4" height="0.9" fill="#B0B0B4"/></svg>
<svg style="left:354.4px;top:374.4px" width="6.4" height="6.6" viewBox="0 0 6.4 6.6"><path d="M0.4 3.8L2.2 6.2L6 0.4" fill="none" stroke="#A6A6AA" stroke-width="1.25"/></svg>
<svg style="left:364.9px;top:376.1px" width="5.8" height="5" viewBox="0 0 5.8 5"><path d="M0.3 0.2L5.5 4.8M5.5 0.2L0.3 4.8" stroke="#A4A4A8" stroke-width="1.3"/></svg>
<svg style="left:377px;top:375.3px" width="4" height="6.2" viewBox="0 0 4 6.2"><path d="M4 0V6.2L0 3.1Z" fill="#96969A"/></svg>
<svg style="left:742.4px;top:375.3px" width="4" height="6.2" viewBox="0 0 4 6.2"><path d="M0 0V6.2L4 3.1Z" fill="#96969A"/></svg>
<div class="a" style="left:206px;top:387.1px;width:39.8px;height:18.5px;background:#F4F4F6;border:1.2px solid #2E8AD8;"></div>
<svg style="left:210.4px;top:391.6px" width="10.4" height="9.6" viewBox="0 0 10.4 9.6"><path d="M3 0.6H9Q10 0.6 10 1.7V2.5H8.2V9H1.5Q0.5 9 0.5 8V7.3H3Z" fill="#fff" stroke="#2B2B2B" stroke-width="1"/><path d="M3 7.3H6.4V8.8M8.2 2.5V1.6" fill="none" stroke="#2B2B2B" stroke-width="0.8"/><path d="M0.7 8.6H6.4" stroke="#2B2B2B" stroke-width="1.2"/></svg>
<div class="a" style="left:249.2px;top:389px;width:1px;height:15px;background:#CFD1DE;"></div>
<svg style="left:256.2px;top:392px" width="9.6" height="8.4" viewBox="0 0 9.6 8.4"><path d="M2 2.2H9.4M0.2 6.2H7.6" stroke="#2B2B2B" stroke-width="1.2"/><path d="M3.2 0L0.2 2.2L3.2 4.4ZM6.4 4L9.4 6.2L6.4 8.4Z" fill="#2B2B2B"/></svg>
<div class="a" style="left:273.6px;top:389px;width:1px;height:15px;background:#CFD1DE;"></div>
<svg style="left:282px;top:392px" width="8.8" height="9" viewBox="0 0 8.8 9"><rect x="0.4" y="0.4" width="8" height="8.2" fill="#fff" stroke="#3A3A3C" stroke-width="0.8"/><path d="M2.4 0.4V8.6M4.4 0.4V8.6M6.4 0.4V8.6M0.4 2.4H8.4M0.4 4.4H8.4M0.4 6.4H8.4" stroke="#3A3A3C" stroke-width="0.6"/></svg>
<svg style="left:326.4px;top:394px" width="3.4" height="5.4" viewBox="0 0 3.4 5.4"><path d="M3.4 0V5.4L0 2.7Z" fill="#1E1E1E"/></svg>
<svg style="left:346px;top:394px" width="3.4" height="5.4" viewBox="0 0 3.4 5.4"><path d="M0 0V5.4L3.4 2.7Z" fill="#1E1E1E"/></svg>
<div class="a" style="left:446.2px;top:389px;width:1px;height:15px;background:#CFD1DE;"></div>
<svg style="left:454.4px;top:390.6px" width="10.6" height="11" viewBox="0 0 10.6 11"><g transform="translate(0.1,2.8)"><path d="M0 1.235V5.864999999999999Q0 7.1 3.25 7.1Q6.5 7.1 6.5 5.864999999999999V1.235Z" fill="#3C3C3E"/><ellipse cx="3.25" cy="1.3350000000000002" rx="2.7" ry="0.8850000000000001" fill="#E2E2E5" stroke="#3C3C3E" stroke-width="1.1"/></g><path d="M2.4 0.4Q3.35 -0.3 4.3 0.4L4.9 3.9H1.8Z" fill="#1E5FB4"/><circle cx="7.7" cy="8.4" r="2.9" fill="#E01B10"/><path d="M6.6 7.300000000000001L8.8 9.5M8.8 7.300000000000001L6.6 9.5" stroke="#fff" stroke-width="0.9"/></svg>
<div class="a" style="left:550.6px;top:389px;width:1px;height:15px;background:#CFD1DE;"></div>
<svg style="left:558px;top:390.8px" width="11.4" height="11.4" viewBox="0 0 11.4 11.4"><circle cx="5.7" cy="5.7" r="5.6" fill="#2E9B34"/><path d="M2.8 5.8L4.9 8L8.6 3.6" fill="none" stroke="#fff" stroke-width="1.5"/></svg>
<div class="a" style="left:699.6px;top:389px;width:1px;height:15px;background:#CFD1DE;"></div>
<svg style="left:756.6px;top:395.4px" width="6.4" height="6.5" viewBox="0 0 6.4 6.5"><rect x="0" y="0" width="6.4" height="1.2" fill="#6A6A6E"/><path d="M0.3 3H6.1L3.2 6.3Z" fill="#6A6A6E"/></svg>
<svg style="left:7px;top:420.3px" width="10.8" height="10.4" viewBox="0 0 10.8 10.4"><path d="M6 0.5H0.5V9.9H6" fill="none" stroke="#2B2B2B" stroke-width="1"/><path d="M3 5.2H8.6" stroke="#2B2B2B" stroke-width="1.1"/><path d="M7.6 2.6L10.6 5.2L7.6 7.8Z" fill="#2B2B2B"/></svg>
<svg style="left:55.2px;top:419.6px" width="9" height="11.4" viewBox="0 0 9 11.4"><path d="M2 1.6H0.5V9.6H4M5.6 1.6H7V5" fill="none" stroke="#2B2B2B" stroke-width="1"/><path d="M2.4 2.4V0.5H5.2V2.4Z" fill="#fff" stroke="#2B2B2B" stroke-width="0.9"/><circle cx="6.2" cy="8.4" r="2.7" fill="#E02A1C"/><circle cx="6.2" cy="8.4" r="1" fill="#fff"/></svg>
<svg style="left:758px;top:452px" width="8" height="7" viewBox="0 0 8 7"><path d="M7 1V2M5 3V4M7 3V4M3 5V6M5 5V6M7 5V6" stroke="#7FB8E6" stroke-width="1"/></svg>
<svg style="left:214.2px;top:98.8px" width="9.8" height="9.8" viewBox="0 0 9.8 9.8"><path d="M8.9 3A4.4 4.4 0 1 0 8.9 6.8" fill="none" stroke="#6E6E72" stroke-width="1.5"/><path d="M6.9 3.8A2.3 2.3 0 1 0 6.9 6" fill="none" stroke="#77777B" stroke-width="1.1"/><path d="M6.6 1.2L9.6 3.2L7.2 4Z" fill="#6E6E72"/></svg>
<svg style="left:298.4px;top:97.8px" width="11.6" height="10.4" viewBox="0 0 11.6 10.4"><path d="M3.2 0.7H10Q11.1 0.7 11.1 1.9V2.8H9.1V9.7H1.7Q0.5 9.7 0.5 8.6V7.8H3.2Z" fill="#fff" stroke="#262626" stroke-width="1.1"/><path d="M3.2 7.8H7V9.6M9.1 2.8V1.8" fill="none" stroke="#262626" stroke-width="0.9"/><path d="M0.8 9.3H7" stroke="#262626" stroke-width="1.3"/></svg>
<svg style="left:355px;top:101.2px" width="6.8" height="5.8" viewBox="0 0 6.8 5.8"><path d="M0.5 0.3L6.3 5.5M6.3 0.3L0.5 5.5" stroke="#fff" stroke-width="1.3"/></svg>
<svg style="left:755.4px;top:102px" width="6.2" height="3.6" viewBox="0 0 6.2 3.6"><path d="M0 0H6.2L3.1 3.6Z" fill="#1E1E1E"/></svg>
<svg style="left:224.8px;top:118.9px" width="6" height="31" viewBox="0 0 6 31"><rect x="0.5" y="0.5" width="5" height="5" fill="#fff" stroke="#B4B4BC" stroke-width="0.9"/><path d="M1.6 3H4.4" stroke="#8A8A90" stroke-width="0.9"/><path d="M3 5.5V30.3H5.4" fill="none" stroke="#C4C4CC" stroke-width="0.9"/></svg>
<svg style="left:752.6px;top:118.4px" width="8" height="7.4" viewBox="0 0 8 7.4"><path d="M0 3.7H8" stroke="#2B2B2B" stroke-width="1.2"/><path d="M2.6 2.2L4 0.4L5.4 2.2ZM2.6 5.2L4 7L5.4 5.2Z" fill="#2B2B2B"/></svg>
<div class="a" style="left:751px;top:127px;width:13.5px;height:1px;background:#DADAE0;"></div>
<svg style="left:754.6px;top:132.6px" width="5.6" height="3" viewBox="0 0 5.6 3"><path d="M0 3L2.8 0L5.6 3Z" fill="#A6A6AA"/></svg>
<svg style="left:754.6px;top:179.6px" width="5.6" height="3" viewBox="0 0 5.6 3"><path d="M0 0H5.6L2.8 3Z" fill="#A6A6AA"/></svg>
<div class="a" style="left:751px;top:188px;width:13.5px;height:13px;background:#EEEEF2;"></div>
<div class="a" style="left:205px;top:188px;width:15.5px;height:13.2px;background:#F4F4F6;border:1px solid #CDD3E6;border-left:none;"></div>
<svg style="left:209.5px;top:191px" width="8" height="7" viewBox="0 0 8 7"><path d="M4 0V7" stroke="#1E1E1E" stroke-width="1.2"/><path d="M2 2L0.4 3.2L2 4.4ZM6 2L7.6 3.2L6 4.4Z" fill="#2B2B2B"/></svg>
<svg style="left:225.2px;top:191.6px" width="3.6" height="6" viewBox="0 0 3.6 6"><path d="M3.6 0V6L0 3Z" fill="#A2A2A6"/></svg>
<svg style="left:741.4px;top:191.6px" width="3.6" height="6" viewBox="0 0 3.6 6"><path d="M0 0V6L3.6 3Z" fill="#A2A2A6"/></svg>
<div class="t" style="left:29.50px;top:8.54px;font-size:10.7px;color:#242424;transform:scaleX(0.9889)">dbForge Studio 2024 for Oracle - SQL.sql*</div>
<div class="t" style="left:7.00px;top:33.74px;font-size:9.4px;color:#242424;transform:scaleX(0.9851)"><u>F</u>ile</div>
<div class="t" style="left:32.50px;top:33.74px;font-size:9.4px;color:#242424;transform:scaleX(0.9832)"><u>E</u>dit</div>
<div class="t" style="left:59.50px;top:33.74px;font-size:9.4px;color:#242424;transform:scaleX(0.9865)"><u>V</u>iew</div>
<div class="t" style="left:90.25px;top:33.74px;font-size:9.4px;color:#242424;transform:scaleX(0.9376)"><u>D</u>atabase</div>
<div class="t" style="left:138.75px;top:33.74px;font-size:9.4px;color:#242424;transform:scaleX(0.9872)">Co<u>m</u>parison</div>
<div class="t" style="left:200.25px;top:33.74px;font-size:9.4px;color:#242424;transform:scaleX(0.8599)"><u>S</u>QL</div>
<div class="t" style="left:228.00px;top:33.74px;font-size:9.4px;color:#242424;transform:scaleX(0.9406)">D<u>a</u>ta</div>
<div class="t" style="left:258.00px;top:33.74px;font-size:9.4px;color:#242424;transform:scaleX(0.9732)">De<u>b</u>ug</div>
<div class="t" style="left:296.00px;top:33.74px;font-size:9.4px;color:#242424;transform:scaleX(1.0233)"><u>T</u>ools</div>
<div class="t" style="left:328.75px;top:33.74px;font-size:9.4px;color:#242424;transform:scaleX(1.0462)"><u>W</u>indow</div>
<div class="t" style="left:374.50px;top:33.74px;font-size:9.4px;color:#242424;transform:scaleX(1.0442)"><u>H</u>elp</div>
<div class="t" style="left:28.25px;top:54.24px;font-size:9.4px;color:#242424;transform:scaleX(0.9134)">New SQL</div>
<div class="t" style="left:88.25px;top:54.24px;font-size:9.4px;color:#242424;transform:scaleX(0.9682)">New Query</div>
<div class="t" style="left:448.25px;top:54.74px;font-size:9.4px;color:#242424;transform:scaleX(1.0097)">Connection</div>
<div class="t" style="left:501.25px;top:54.99px;font-size:8.7px;color:#242424;transform:scaleX(0.9622)">sys@demo-oracle:ORA...</div>
<div class="t" style="left:29.50px;top:75.99px;font-size:9.4px;color:#242424;transform:scaleX(0.9993)"><u>A</u>utoCommit OFF</div>
<div class="t" style="left:199.50px;top:75.99px;font-size:9.4px;color:#242424;transform:scaleX(0.9486)"><u>E</u>xecute</div>
<div class="t" style="left:6.25px;top:97.24px;font-size:8.7px;color:#242424;transform:scaleX(0.9555)">Database Explorer - sakila@demo-oracle:...</div>
<div class="t" style="left:226.50px;top:97.24px;font-size:8.7px;color:#242424;transform:scaleX(0.9778)">Start Page</div>
<div class="t" style="left:312.00px;top:97.24px;font-size:8.7px;color:#fff;transform:scaleX(0.9738)">SQL.sql*</div>
<div class="t" style="left:34.50px;top:134.59px;font-size:8.7px;color:#242424;transform:scaleX(0.9227)">sakila@demo-oracle:ORACLTW</div>
<div class="t" style="left:49.50px;top:147.69px;font-size:8.7px;color:#242424;transform:scaleX(0.9748)">Tables (19)</div>
<div class="t" style="left:63.80px;top:160.89px;font-size:8.7px;color:#242424;transform:scaleX(0.8893)">ACTOR</div>
<div class="t" style="left:63.80px;top:173.91px;font-size:8.7px;color:#242424;transform:scaleX(0.9268)">ACTOR_DATA</div>
<div class="t" style="left:63.80px;top:186.93px;font-size:8.7px;color:#242424;transform:scaleX(0.8548)">ADDRESS</div>
<div class="t" style="left:63.80px;top:199.95px;font-size:8.7px;color:#242424;transform:scaleX(0.8717)">CATEGORY</div>
<div class="t" style="left:63.80px;top:212.97px;font-size:8.7px;color:#242424;transform:scaleX(0.9294)">CITY</div>
<div class="t" style="left:63.80px;top:225.99px;font-size:8.7px;color:#242424;transform:scaleX(0.8716)">COUNTRY</div>
<div class="t" style="left:63.80px;top:239.01px;font-size:8.7px;color:#242424;transform:scaleX(0.8555)">CUSTOMER</div>
<div class="t" style="left:63.80px;top:252.03px;font-size:8.7px;color:#242424;transform:scaleX(0.8285)">EMPLOYEES</div>
<div class="t" style="left:63.80px;top:265.05px;font-size:8.7px;color:#242424;transform:scaleX(0.9294)">FILM</div>
<div class="t" style="left:63.80px;top:278.07px;font-size:8.7px;color:#242424;transform:scaleX(0.9021)">FILM_ACTOR</div>
<div class="t" style="left:63.80px;top:291.09px;font-size:8.7px;color:#242424;transform:scaleX(0.8832)">FILM_CATEGORY</div>
<div class="t" style="left:63.80px;top:304.11px;font-size:8.7px;color:#242424;transform:scaleX(0.8819)">FILM_TEXT</div>
<div class="t" style="left:63.80px;top:317.13px;font-size:8.7px;color:#242424;transform:scaleX(0.8794)">INVENTORY</div>
<div class="t" style="left:63.80px;top:330.15px;font-size:8.7px;color:#242424;transform:scaleX(0.8554)">LANGUAGE</div>
<div class="t" style="left:63.80px;top:343.17px;font-size:8.7px;color:#242424;transform:scaleX(0.8792)">PAYMENT</div>
<div class="t" style="left:63.80px;top:356.19px;font-size:8.7px;color:#242424;transform:scaleX(0.8680)">RENTAL</div>
<div class="t" style="left:63.80px;top:369.21px;font-size:8.7px;color:#242424;transform:scaleX(0.9153)">STAFF</div>
<div class="t" style="left:63.80px;top:382.23px;font-size:8.7px;color:#242424;transform:scaleX(0.8663)">STORE</div>
<div class="t" style="left:63.80px;top:395.25px;font-size:8.7px;color:#242424;transform:scaleX(0.8499)">STUDENTS</div>
<div class="t" style="left:384.50px;top:214.99px;font-size:8.7px;color:#242424;transform:scaleX(0.9261)">1000</div>
<div class="t" style="left:222.00px;top:233.99px;font-size:8.7px;color:#242424;transform:scaleX(0.8901)">OWNER</div>
<div class="t" style="left:222.00px;top:243.93px;font-size:7.7px;color:#A0A0A0;transform:scaleX(0.9772)">VARCHAR2(128)</div>
<div class="t" style="left:293.25px;top:233.99px;font-size:8.7px;color:#242424;transform:scaleX(0.8560)">OBJECT_TYPE</div>
<div class="t" style="left:293.25px;top:243.93px;font-size:7.7px;color:#A0A0A0;transform:scaleX(0.9851)">VARCHAR2(23)</div>
<div class="t" style="left:361.25px;top:233.99px;font-size:8.7px;color:#242424;transform:scaleX(0.8629)">OBJECT_NAME</div>
<div class="t" style="left:361.25px;top:243.93px;font-size:7.7px;color:#A0A0A0;transform:scaleX(0.9688)">VARCHAR2(128)</div>
<div class="t" style="left:222.00px;top:258.19px;font-size:8.7px;color:#242424;transform:scaleX(0.8649)">PUBLIC</div>
<div class="t" style="left:293.25px;top:258.19px;font-size:8.7px;color:#242424;transform:scaleX(0.8569)">SYNONYM</div>
<div class="t" style="left:361.25px;top:258.19px;font-size:8.7px;color:#242424;transform:scaleX(0.8555)">DBURITYPE</div>
<div class="t" style="left:222.00px;top:274.27px;font-size:8.7px;color:#242424;transform:scaleX(0.8649)">PUBLIC</div>
<div class="t" style="left:293.25px;top:274.27px;font-size:8.7px;color:#242424;transform:scaleX(0.8569)">SYNONYM</div>
<div class="t" style="left:361.25px;top:274.27px;font-size:8.7px;color:#242424;transform:scaleX(0.8573)">FTPURITYPE</div>
<div class="t" style="left:222.00px;top:290.35px;font-size:8.7px;color:#242424;transform:scaleX(0.8649)">PUBLIC</div>
<div class="t" style="left:293.25px;top:290.35px;font-size:8.7px;color:#242424;transform:scaleX(0.8569)">SYNONYM</div>
<div class="t" style="left:361.25px;top:290.35px;font-size:8.7px;color:#242424;transform:scaleX(0.8457)">XDBURITYPE</div>
<div class="t" style="left:222.00px;top:306.43px;font-size:8.7px;color:#242424;transform:scaleX(0.8649)">PUBLIC</div>
<div class="t" style="left:293.25px;top:306.43px;font-size:8.7px;color:#242424;transform:scaleX(0.8569)">SYNONYM</div>
<div class="t" style="left:361.25px;top:306.43px;font-size:8.7px;color:#242424;transform:scaleX(0.8543)">HTTPURITYPE</div>
<div class="t" style="left:222.00px;top:322.51px;font-size:8.7px;color:#242424;transform:scaleX(0.8649)">PUBLIC</div>
<div class="t" style="left:293.25px;top:322.51px;font-size:8.7px;color:#242424;transform:scaleX(0.8569)">SYNONYM</div>
<div class="t" style="left:361.25px;top:322.51px;font-size:8.7px;color:#242424;transform:scaleX(0.8964)">WRI$_REPT_SQLPI</div>
<div class="t" style="left:222.00px;top:338.59px;font-size:8.7px;color:#242424;transform:scaleX(0.8649)">PUBLIC</div>
<div class="t" style="left:293.25px;top:338.59px;font-size:8.7px;color:#242424;transform:scaleX(0.8569)">SYNONYM</div>
<div class="t" style="left:361.25px;top:338.59px;font-size:8.7px;color:#242424;transform:scaleX(0.8922)">WRI$_REPT_SQLT</div>
<div class="t" style="left:222.00px;top:354.67px;font-size:8.7px;color:#242424;transform:scaleX(0.8649)">PUBLIC</div>
<div class="t" style="left:293.25px;top:354.67px;font-size:8.7px;color:#242424;transform:scaleX(0.8569)">SYNONYM</div>
<div class="t" style="left:361.25px;top:354.67px;font-size:8.7px;color:#242424;transform:scaleX(0.8808)">WRI$_REPT_XPLAN</div>
<div class="t" style="left:247.50px;top:371.54px;font-size:9.4px;color:#242424;transform:scaleX(0.8886)">Record 1 of 86</div>
<div class="t" style="left:225.25px;top:389.24px;font-size:9.4px;color:#242424;transform:scaleX(0.9824)">Text</div>
<div class="t" style="left:295.75px;top:389.24px;font-size:9.4px;color:#242424;transform:scaleX(0.9287)">Data</div>
<div class="t" style="left:472.00px;top:389.24px;font-size:9.4px;color:#242424;transform:scaleX(0.9892)">AutoCommit OFF</div>
<div class="t" style="left:576.50px;top:389.24px;font-size:9.4px;color:#242424;transform:scaleX(0.9684)">Query executed successfully.</div>
<div class="t" style="left:705.00px;top:389.24px;font-size:9.4px;color:#242424;transform:scaleX(0.9115)">0:00:00.258</div>
<div class="t" style="left:20.30px;top:418.89px;font-size:8.7px;color:#242424;transform:scaleX(1.0232)">Output</div>
<div class="t" style="left:66.10px;top:418.89px;font-size:8.7px;color:#242424;transform:scaleX(0.9617)">Error List</div>
<div class="t" style="left:9.90px;top:442.34px;font-size:9.4px;color:#fff;transform:scaleX(0.9001)">Ready</div>
<div class="t" style="left:603.50px;top:442.34px;font-size:9.4px;color:#fff;transform:scaleX(0.9260)">Ln 3</div>
<div class="t" style="left:629.50px;top:442.34px;font-size:9.4px;color:#fff;transform:scaleX(0.9628)">Col 25</div>
<div class="t" style="left:664.40px;top:442.34px;font-size:9.4px;color:#fff;transform:scaleX(0.9308)">Ch 25</div>
<div class="m" style="left:234.7px;top:116.99px;font-size:9.4px;line-height:12px;transform:scaleX(0.9450)"><span style="color:#0000FF">SELECT</span><span style="color:#2B8A8A"> owner<span style="color:#808080">,</span> object_type<span style="color:#808080">,</span> object_name</span></div>
<div class="m" style="left:234.7px;top:129.29px;font-size:9.4px;line-height:12px;transform:scaleX(0.9450)"><span style="color:#0000FF">FROM</span><span style="color:#2B8A8A"> all_objects</span></div>
<div class="m" style="left:234.7px;top:139.89px;font-size:9.4px;line-height:12px;transform:scaleX(0.9450)"><span style="color:#0000FF">WHERE</span><span style="color:#2B7A9E"> status</span><span style="color:#808080"> = </span><span style="color:#1E1E1E">'INVALID'</span></div>
</body></html>
